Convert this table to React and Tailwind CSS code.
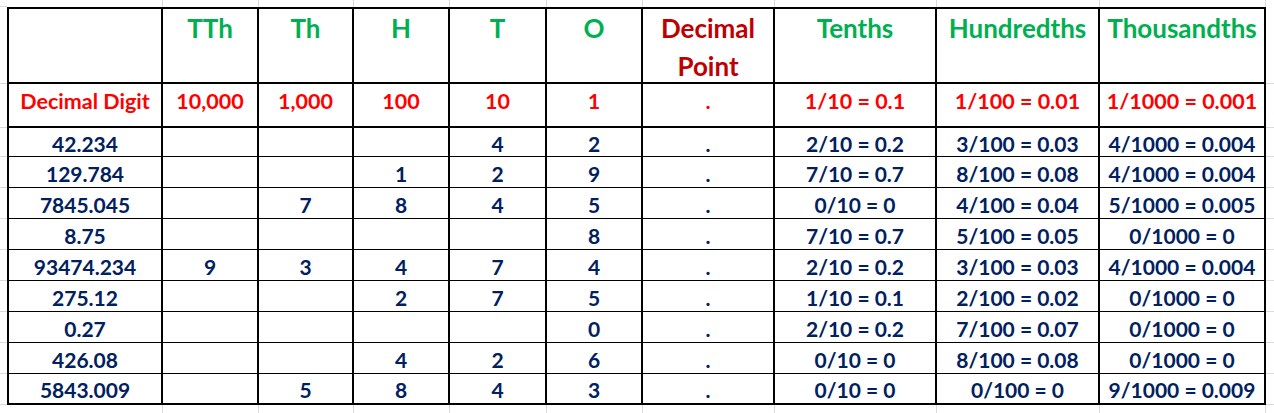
const HEAD = ["", "TTh", "Th", "H", "T", "O", "Decimal Point", "Tenths", "Hundredths", "Thousandths"];
const PLACE = ["Decimal Digit", "10,000", "1,000", "100", "10", "1", ".", "1/10 = 0.1", "1/100 = 0.01", "1/1000 = 0.001"];

const ROWS = [
  ["42.234", "", "", "", "4", "2", ".", "2/10 = 0.2", "3/100 = 0.03", "4/1000 = 0.004"],
  ["129.784", "", "", "1", "2", "9", ".", "7/10 = 0.7", "8/100 = 0.08", "4/1000 = 0.004"],
  ["7845.045", "", "7", "8", "4", "5", ".", "0/10 = 0", "4/100 = 0.04", "5/1000 = 0.005"],
  ["8.75", "", "", "", "", "8", ".", "7/10 = 0.7", "5/100 = 0.05", "0/1000 = 0"],
  ["93474.234", "9", "3", "4", "7", "4", ".", "2/10 = 0.2", "3/100 = 0.03", "4/1000 = 0.004"],
  ["275.12", "", "", "2", "7", "5", ".", "1/10 = 0.1", "2/100 = 0.02", "0/1000 = 0"],
  ["0.27", "", "", "", "", "0", ".", "2/10 = 0.2", "7/100 = 0.07", "0/1000 = 0"],
  ["426.08", "", "", "4", "2", "6", ".", "0/10 = 0", "8/100 = 0.08", "0/1000 = 0"],
  ["5843.009", "", "5", "8", "4", "3", ".", "0/10 = 0", "0/100 = 0", "9/1000 = 0.009"],
];

const COLS = 10;

function EdgeRow({ bottom }) {
  // spreadsheet gridlines peeking out around the table
  return (
    <>
      <div className={bottom ? "" : "border-b border-[#d5dae3]"} />
      {Array.from({ length: COLS }).map((_, i) => (
        <div key={i} className="border-r border-[#d5dae3]" />
      ))}
      <div />
    </>
  );
}

function Cell({ col, children, kind, last }) {
  const left = col === 0 ? "border-l-2" : "";
  const bottom = kind === "head" || kind === "place" || last ? "border-b-2" : "border-b";
  const top = kind === "head" ? "border-t-2" : "";

  let text = "text-[#002060]";
  let align = "items-center pt-[3px]";
  if (kind === "head") {
    text = col === 6 ? "text-[#c00000] text-[26px]" : "text-[#00b050] text-[26px]";
    align = "items-start leading-[38px]";
  } else if (kind === "place") {
    text = "text-[#ff0000] text-[21.5px]";
    align = "items-center pb-[8px]";
  }

  return (
    <div
      className={`flex justify-center text-center border-r-2 border-black ${left} ${top} ${bottom} ${align} ${text}`}
    >
      {children}
    </div>
  );
}

export default function App() {
  return (
    <div
      className="grid h-[413px] w-[1274px] overflow-hidden bg-white text-[21px] font-bold leading-[26px] grid-cols-[7px_156px_96px_95px_96px_97px_96px_132px_162px_163px_166px_8px] grid-rows-[7px_77px_44px_29px_31px_31px_31px_31px_31px_31px_31px_31px_8px]"
      style={{ fontFamily: "Lato, 'Noto Sans', sans-serif" }}
    >
      <EdgeRow />

      <div className="border-b border-[#d5dae3]" />
      {HEAD.map((h, i) => (
        <Cell key={i} col={i} kind="head">
          {h}
        </Cell>
      ))}
      <div className="border-b border-[#d5dae3]" />

      <div className="border-b border-[#d5dae3]" />
      {PLACE.map((p, i) => (
        <Cell key={i} col={i} kind="place">
          {p}
        </Cell>
      ))}
      <div className="border-b border-[#d5dae3]" />

      {ROWS.map((row, r) => (
        <div key={r} className="contents">
          <div className="border-b border-[#d5dae3]" />
          {row.map((v, i) => (
            <Cell key={i} col={i} kind="data" last={r === ROWS.length - 1}>
              {v}
            </Cell>
          ))}
          <div className="border-b border-[#d5dae3]" />
        </div>
      ))}

      <EdgeRow bottom />
    </div>
  );
}
